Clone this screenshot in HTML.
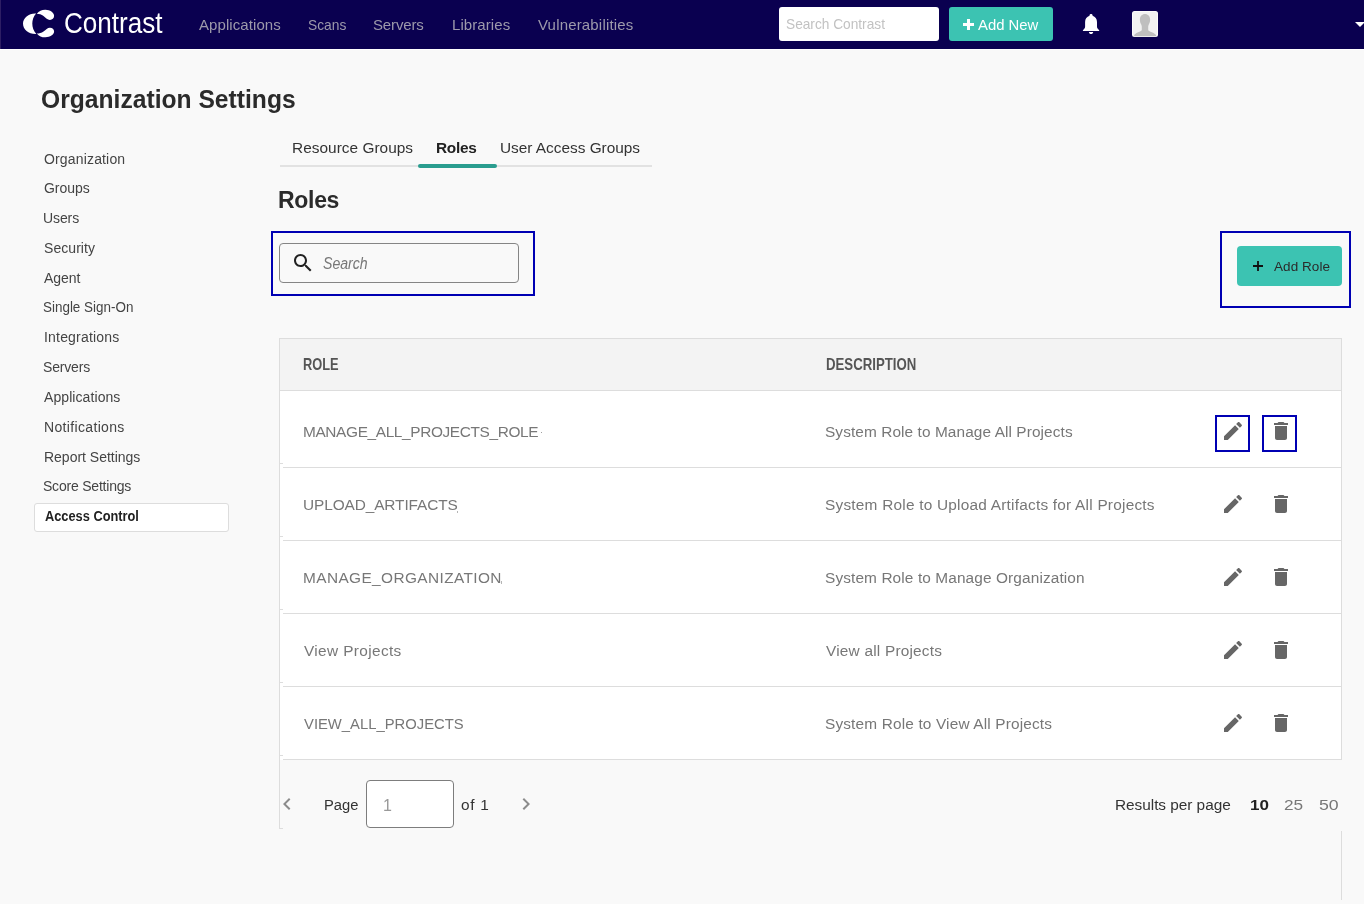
<!DOCTYPE html>
<html lang="en">
<head>
<meta charset="utf-8">
<title>Organization Settings - Roles</title>
<style>
*{box-sizing:border-box;margin:0;padding:0}
html,body{width:1364px;height:904px;overflow:hidden}
body{background:#f9f9f9;font-family:"Liberation Sans",sans-serif;color:#333;position:relative}
.t{position:absolute;white-space:nowrap;line-height:1;transform-origin:0 0;display:block;font-weight:normal;font-style:normal;text-decoration:none}
.b{position:absolute;display:block}
#nav{left:0;top:0;width:1364px;height:49px;background:#0a0050;border-left:1px solid #2d1e64}
#navline{left:0;top:49px;width:1364px;height:1px;background:#fff}
#nsearch{left:779px;top:7px;width:160px;height:34px;background:#fff;border-radius:3px}
#addnew{left:949px;top:7px;width:104px;height:34px;background:#3cc3b2;border-radius:3px}
#caret{left:1355px;top:22px;width:0;height:0;border-left:5px solid transparent;border-right:5px solid transparent;border-top:5px solid #fff}
#acbox{left:34px;top:503px;width:195px;height:29px;background:#fff;border:1px solid #ddd;border-radius:3px}
#tabline{left:280px;top:165px;width:372px;height:2px;background:#e2e2e2}
#tabactive{left:418px;top:164px;width:79px;height:4px;background:#2a9d8f;border-radius:2px}
.ol{border:2px solid #0000b3}
#sinput{left:279px;top:243px;width:240px;height:40px;border:1px solid #858585;border-radius:4px;background:#f9f9f9}
#addrole{left:1237px;top:246px;width:105px;height:40px;background:#3cc3b2;border-radius:4px}
#thead{left:279px;top:338px;width:1063px;height:53px;background:#f3f3f3;border:1px solid #ddd}
#tbody{left:279px;top:391px;width:1063px;height:369px;background:#fff;border-left:1px solid #ddd;border-right:1px solid #ddd}
.sep{left:283px;width:1059px;height:1px;background:#ddd}
.tick{left:280px;width:3px;height:1px;background:#ddd}
.ic{position:absolute;width:24px;height:24px;fill:#666}
#lb{left:279px;top:760px;width:1px;height:69px;background:#ddd}
#rb{left:1341px;top:831px;width:1px;height:69px;background:#ddd}
#pinput{left:366px;top:780px;width:88px;height:48px;border:1px solid #7d7d7d;border-radius:4px;background:#fff}
</style>
</head>
<body>
<div class="b" id="nav"></div><div class="b" id="navline"></div>
<svg class="b" style="left:0;top:0" width="60" height="48" viewBox="0 0 60 48"><g fill="#fff">
<path d="M36.1 13.4C29 13 23 17.500 23 23.600c0 6.400 6 10.900 13.300 10.500-2.800-3.100-4-6.600-4-10.500 0-3.800 1.200-7.300 3.800-10.200z"/>
<path d="M36.800 13.700C39 11 42 9.700 45.500 9.800c4.500.1 8.500 2.700 8.600 6 .1 2.700-2.100 4.200-4.300 4.100-2.300-.1-3.800-2.100-6.300-4-2-1.500-4.300-2.200-6.700-2.200z"/>
<path d="M36.800 33.400C39 36.100 42 37.400 45.500 37.300c4.500-.1 8.500-2.600 8.600-5.700.1-2.500-2.100-3.900-4.300-3.800-2.300.1-3.800 1.900-6.300 3.700-2 1.400-4.300 2.100-6.700 2.100z"/>
</g></svg>
<div class="b" id="nsearch"></div>
<div class="b" id="addnew"></div>
<svg class="b" style="left:963px;top:19px" width="11" height="11" viewBox="0 0 11 11"><path fill="#fff" d="M4 0h3v4h4v3H7v4H4V7H0V4h4z"/></svg>
<svg class="b" style="left:1076px;top:8px" width="30" height="32" viewBox="1076 8 30 32"><path fill="#fff" d="M1091.050 14c.85 0 1.550.6 1.550 1.400v.4c2.600.8 4.400 3.200 4.400 6.200v4.500c0 1.300.6 2.100 1.500 3 .5.500.8.900.8 1.500h-16.500c0-.6.300-1 .8-1.500.9-.9 1.500-1.700 1.500-3V22c0-3 1.800-5.400 4.400-6.200v-.4c0-.8.700-1.400 1.550-1.400zM1088.900 32h4.300c0 1.200-1 2.100-2.150 2.100s-2.150-.9-2.150-2.100z"/></svg>
<svg class="b" style="left:1132px;top:11px" width="26" height="26" viewBox="1132 11 26 26"><rect x="1132" y="11" width="26" height="26" rx="2.500" fill="#fdfdfd"/><rect x="1132.800" y="11.800" width="24.400" height="24.400" rx="1.800" fill="#f2f2f2"/><path fill="#bfbfbf" d="M1145 14c3 0 5.100 2.300 5.100 5.500 0 2-.5 3.500-1.100 4.500-.5 1-.8 1.800-.8 2.800v2.700c0 1 .6 1.500 1.800 1.900 2.500.8 5 1.800 6 3.600v1.300h-21.800V35c1-1.800 3.300-2.800 5.800-3.600 1.200-.4 1.800-.9 1.800-1.900v-2.700c0-1-.3-1.800-.8-2.800-.6-1-1.100-2.500-1.100-4.500 0-3.200 2.100-5.500 5.100-5.500z"/></svg>
<div class="b" id="caret"></div>

<div class="b" id="acbox"></div>
<div class="b" id="tabline"></div><div class="b" id="tabactive"></div>

<div class="b ol" style="left:271px;top:231px;width:264px;height:65px"></div>
<div class="b" id="sinput"></div>
<svg class="ic" style="left:291px;top:251px;fill:#222" viewBox="0 0 24 24"><path d="M15.5 14h-.79l-.28-.27C15.410 12.590 16 11.110 16 9.500 16 5.910 13.090 3 9.500 3S3 5.910 3 9.500 5.910 16 9.500 16c1.610 0 3.090-.59 4.230-1.570l.27.280v.79l5 4.990L20.490 19l-4.990-5zm-6 0C7.010 14 5 11.990 5 9.500S7.010 5 9.500 5 14 7.010 14 9.500 11.990 14 9.500 14z"/></svg>
<div class="b ol" style="left:1220px;top:231px;width:131px;height:77px"></div>
<div class="b" id="addrole"></div>
<svg class="b" style="left:1253px;top:261px" width="10" height="10" viewBox="0 0 10 10"><path fill="#111" d="M4.100 0h1.800v4.100H10v1.800H5.900V10H4.100V5.900H0V4.100h4.100z"/></svg>

<div class="b" id="thead"></div>
<div class="b" id="tbody"></div>
<div class="b sep" style="top:467px"></div><div class="b tick" style="top:463px"></div>
<svg class="ic" style="left:1221px;top:419px" viewBox="0 0 24 24"><path d="M3 17.25V21h3.75L17.810 9.940l-3.750-3.750L3 17.250zM20.710 7.040c.39-.39.39-1.020 0-1.410l-2.340-2.340c-.39-.39-1.020-.39-1.410 0l-1.830 1.830 3.750 3.750 1.830-1.830z"/></svg>
<svg class="ic" style="left:1269px;top:419px" viewBox="0 0 24 24"><path d="M6 19c0 1.100.9 2 2 2h8c1.100 0 2-.9 2-2V7H6v12zM19 4h-3.500l-1-1h-5l-1 1H5v2h14V4z"/></svg>
<div class="b sep" style="top:540px"></div><div class="b tick" style="top:536px"></div>
<svg class="ic" style="left:1221px;top:492px" viewBox="0 0 24 24"><path d="M3 17.25V21h3.75L17.810 9.940l-3.750-3.750L3 17.250zM20.710 7.040c.39-.39.39-1.020 0-1.410l-2.340-2.340c-.39-.39-1.020-.39-1.410 0l-1.830 1.830 3.750 3.750 1.830-1.830z"/></svg>
<svg class="ic" style="left:1269px;top:492px" viewBox="0 0 24 24"><path d="M6 19c0 1.100.9 2 2 2h8c1.100 0 2-.9 2-2V7H6v12zM19 4h-3.500l-1-1h-5l-1 1H5v2h14V4z"/></svg>
<div class="b sep" style="top:613px"></div><div class="b tick" style="top:609px"></div>
<svg class="ic" style="left:1221px;top:565px" viewBox="0 0 24 24"><path d="M3 17.25V21h3.75L17.810 9.940l-3.750-3.750L3 17.250zM20.710 7.040c.39-.39.39-1.020 0-1.410l-2.340-2.340c-.39-.39-1.020-.39-1.410 0l-1.830 1.830 3.750 3.750 1.830-1.830z"/></svg>
<svg class="ic" style="left:1269px;top:565px" viewBox="0 0 24 24"><path d="M6 19c0 1.100.9 2 2 2h8c1.100 0 2-.9 2-2V7H6v12zM19 4h-3.500l-1-1h-5l-1 1H5v2h14V4z"/></svg>
<div class="b sep" style="top:686px"></div><div class="b tick" style="top:682px"></div>
<svg class="ic" style="left:1221px;top:638px" viewBox="0 0 24 24"><path d="M3 17.25V21h3.75L17.810 9.940l-3.750-3.750L3 17.250zM20.710 7.040c.39-.39.39-1.020 0-1.410l-2.340-2.340c-.39-.39-1.020-.39-1.410 0l-1.830 1.830 3.750 3.750 1.830-1.830z"/></svg>
<svg class="ic" style="left:1269px;top:638px" viewBox="0 0 24 24"><path d="M6 19c0 1.100.9 2 2 2h8c1.100 0 2-.9 2-2V7H6v12zM19 4h-3.500l-1-1h-5l-1 1H5v2h14V4z"/></svg>
<div class="b sep" style="top:759px"></div><div class="b tick" style="top:755px"></div>
<svg class="ic" style="left:1221px;top:711px" viewBox="0 0 24 24"><path d="M3 17.25V21h3.75L17.810 9.940l-3.750-3.750L3 17.250zM20.710 7.040c.39-.39.39-1.020 0-1.410l-2.340-2.340c-.39-.39-1.020-.39-1.410 0l-1.830 1.830 3.750 3.750 1.830-1.830z"/></svg>
<svg class="ic" style="left:1269px;top:711px" viewBox="0 0 24 24"><path d="M6 19c0 1.100.9 2 2 2h8c1.100 0 2-.9 2-2V7H6v12zM19 4h-3.500l-1-1h-5l-1 1H5v2h14V4z"/></svg>
<div class="b ol" style="left:1215px;top:415px;width:35px;height:37px"></div>
<div class="b ol" style="left:1262px;top:415px;width:35px;height:37px"></div>
<div class="b" style="left:541px;top:432px;width:1px;height:1px;background:#a0a0a0"></div>
<div class="b" style="left:457px;top:511px;width:1px;height:2px;background:#b5b5b5"></div>
<div class="b" style="left:501px;top:581px;width:1px;height:3px;background:#b5b5b5"></div>
<div class="b" id="lb"></div><div class="b tick" style="top:828px"></div><div class="b" id="rb"></div>
<div class="b" id="pinput"></div>
<svg class="ic" style="left:275px;top:792px;fill:#8c8c8c" viewBox="0 0 24 24"><path d="M15.410 7.410L14 6l-6 6 6 6 1.410-1.410L10.830 12z"/></svg>
<svg class="ic" style="left:514px;top:792px;fill:#8c8c8c" viewBox="0 0 24 24"><path d="M10 6L8.590 7.410 13.170 12l-4.580 4.590L10 18l6-6z"/></svg>
<div id="tx" style="position:absolute;left:0;top:0;width:1364px;height:904px;will-change:transform">
<header><nav>
<a class="t" style="left:64.00px;top:9.00px;font-size:29px;color:#fff;transform:scaleX(0.8996)">Contrast</a>
<a class="t" style="left:199.00px;top:17.00px;font-size:15px;color:#9d99ab;letter-spacing:0.077px">Applications</a>
<a class="t" style="left:308.00px;top:17.00px;font-size:15px;color:#9d99ab;transform:scaleX(0.9198)">Scans</a>
<a class="t" style="left:373.00px;top:17.00px;font-size:15px;color:#9d99ab;letter-spacing:-0.144px">Servers</a>
<a class="t" style="left:452.00px;top:17.00px;font-size:15px;color:#9d99ab;letter-spacing:0.079px">Libraries</a>
<a class="t" style="left:538.00px;top:17.00px;font-size:15px;color:#9d99ab;letter-spacing:0.173px">Vulnerabilities</a>
<span class="t" style="left:786.00px;top:16.00px;font-size:15px;color:#c2c2c2;transform:scaleX(0.9129)">Search Contrast</span>
<span class="t" style="left:978.00px;top:17.00px;font-size:15.5px;color:#fff;transform:scaleX(0.9586)">Add New</span>
</nav></header>

<h1 class="t" style="left:41.00px;top:86.00px;font-size:26px;color:#2b2b2b;font-weight:bold;transform:scaleX(0.9477)">Organization Settings</h1>

<aside><nav>
<a class="t" style="left:44.00px;top:152.00px;font-size:14px;color:#444;letter-spacing:0.158px">Organization</a>
<a class="t" style="left:44.00px;top:181.00px;font-size:14px;color:#444;letter-spacing:-0.029px">Groups</a>
<a class="t" style="left:43.00px;top:211.00px;font-size:14px;color:#444;letter-spacing:-0.100px">Users</a>
<a class="t" style="left:44.00px;top:241.00px;font-size:14px;color:#444;letter-spacing:0.060px">Security</a>
<a class="t" style="left:44.00px;top:271.00px;font-size:14px;color:#444;letter-spacing:-0.027px">Agent</a>
<a class="t" style="left:43.00px;top:300.00px;font-size:14px;color:#444;transform:scaleX(0.9596)">Single Sign-On</a>
<a class="t" style="left:44.00px;top:330.00px;font-size:14px;color:#444;letter-spacing:0.192px">Integrations</a>
<a class="t" style="left:43.00px;top:360.00px;font-size:14px;color:#444;letter-spacing:-0.178px">Servers</a>
<a class="t" style="left:44.00px;top:390.00px;font-size:14px;color:#444;letter-spacing:0.080px">Applications</a>
<a class="t" style="left:44.00px;top:420.00px;font-size:14px;color:#444;letter-spacing:0.341px">Notifications</a>
<a class="t" style="left:44.00px;top:450.00px;font-size:14px;color:#444;letter-spacing:-0.012px">Report Settings</a>
<a class="t" style="left:43.00px;top:479.00px;font-size:14px;color:#444;letter-spacing:-0.213px">Score Settings</a>
<a class="t" style="left:45.00px;top:509.00px;font-size:14.5px;color:#222;font-weight:bold;transform:scaleX(0.8829)">Access Control</a>
</nav></aside>
<nav>
<a class="t" style="left:292.00px;top:140.00px;font-size:15.4px;color:#333;letter-spacing:0.032px">Resource Groups</a>
<a class="t" style="left:436.00px;top:140.00px;font-size:15.4px;color:#222;font-weight:bold;letter-spacing:-0.264px">Roles</a>
<a class="t" style="left:500.00px;top:140.00px;font-size:15.4px;color:#333;letter-spacing:-0.012px">User Access Groups</a>
</nav>
<section>
<h2 class="t" style="left:278.00px;top:189.00px;font-size:23px;color:#2b2b2b;font-weight:bold;letter-spacing:-0.305px">Roles</h2>
<span class="t" style="left:323.00px;top:256.00px;font-size:16px;color:#777;font-style:italic;transform:scaleX(0.8822)">Search</span>
<span class="t" style="left:1274.00px;top:260.00px;font-size:13.5px;color:#2b2b2b;letter-spacing:0.064px">Add Role</span>
</section>
<section>
<span class="t" style="left:303.00px;top:356.00px;font-size:16.5px;color:#555;font-weight:bold;transform:scaleX(0.7769)">ROLE</span>
<span class="t" style="left:826.00px;top:356.00px;font-size:16.5px;color:#555;font-weight:bold;transform:scaleX(0.8009)">DESCRIPTION</span>
<span class="t" style="left:303.00px;top:424.00px;font-size:15.4px;color:#777;letter-spacing:-0.361px">MANAGE_ALL_PROJECTS_ROLE</span>
<span class="t" style="left:825.00px;top:424.00px;font-size:15.4px;color:#777;letter-spacing:0.089px">System Role to Manage All Projects</span>
<span class="t" style="left:303.00px;top:497.00px;font-size:15.4px;color:#777;letter-spacing:-0.093px">UPLOAD_ARTIFACTS</span>
<span class="t" style="left:825.00px;top:497.00px;font-size:15.4px;color:#777;letter-spacing:0.223px">System Role to Upload Artifacts for All Projects</span>
<span class="t" style="left:303.00px;top:570.00px;font-size:15.4px;color:#777;letter-spacing:0.399px">MANAGE_ORGANIZATION</span>
<span class="t" style="left:825.00px;top:570.00px;font-size:15.4px;color:#777;letter-spacing:0.114px">System Role to Manage Organization</span>
<span class="t" style="left:304.00px;top:643.00px;font-size:15.4px;color:#777;letter-spacing:0.359px">View Projects</span>
<span class="t" style="left:826.00px;top:643.00px;font-size:15.4px;color:#777;letter-spacing:0.208px">View all Projects</span>
<span class="t" style="left:304.00px;top:716.00px;font-size:15.4px;color:#777;transform:scaleX(0.9622)">VIEW_ALL_PROJECTS</span>
<span class="t" style="left:825.00px;top:716.00px;font-size:15.4px;color:#777;letter-spacing:0.155px">System Role to View All Projects</span>
</section>
<footer>
<span class="t" style="left:324.00px;top:797.00px;font-size:15.4px;color:#333;transform:scaleX(0.9588)">Page</span>
<span class="t" style="left:383.00px;top:798.00px;font-size:16px;color:#999">1</span>
<span class="t" style="left:461.00px;top:797.00px;font-size:15.4px;color:#333;letter-spacing:0.680px">of 1</span>
<span class="t" style="left:1115.00px;top:797.00px;font-size:15.4px;color:#333;letter-spacing:-0.042px">Results per page</span>
<span class="t" style="left:1250.00px;top:797.00px;font-size:15.4px;color:#222;font-weight:bold;transform:scaleX(1.1075)">10</span>
<span class="t" style="left:1284.00px;top:797.00px;font-size:15.4px;color:#777;transform:scaleX(1.1202)">25</span>
<span class="t" style="left:1319.00px;top:797.00px;font-size:15.4px;color:#777;transform:scaleX(1.1508)">50</span>
</footer>
</div>
</body>
</html>
